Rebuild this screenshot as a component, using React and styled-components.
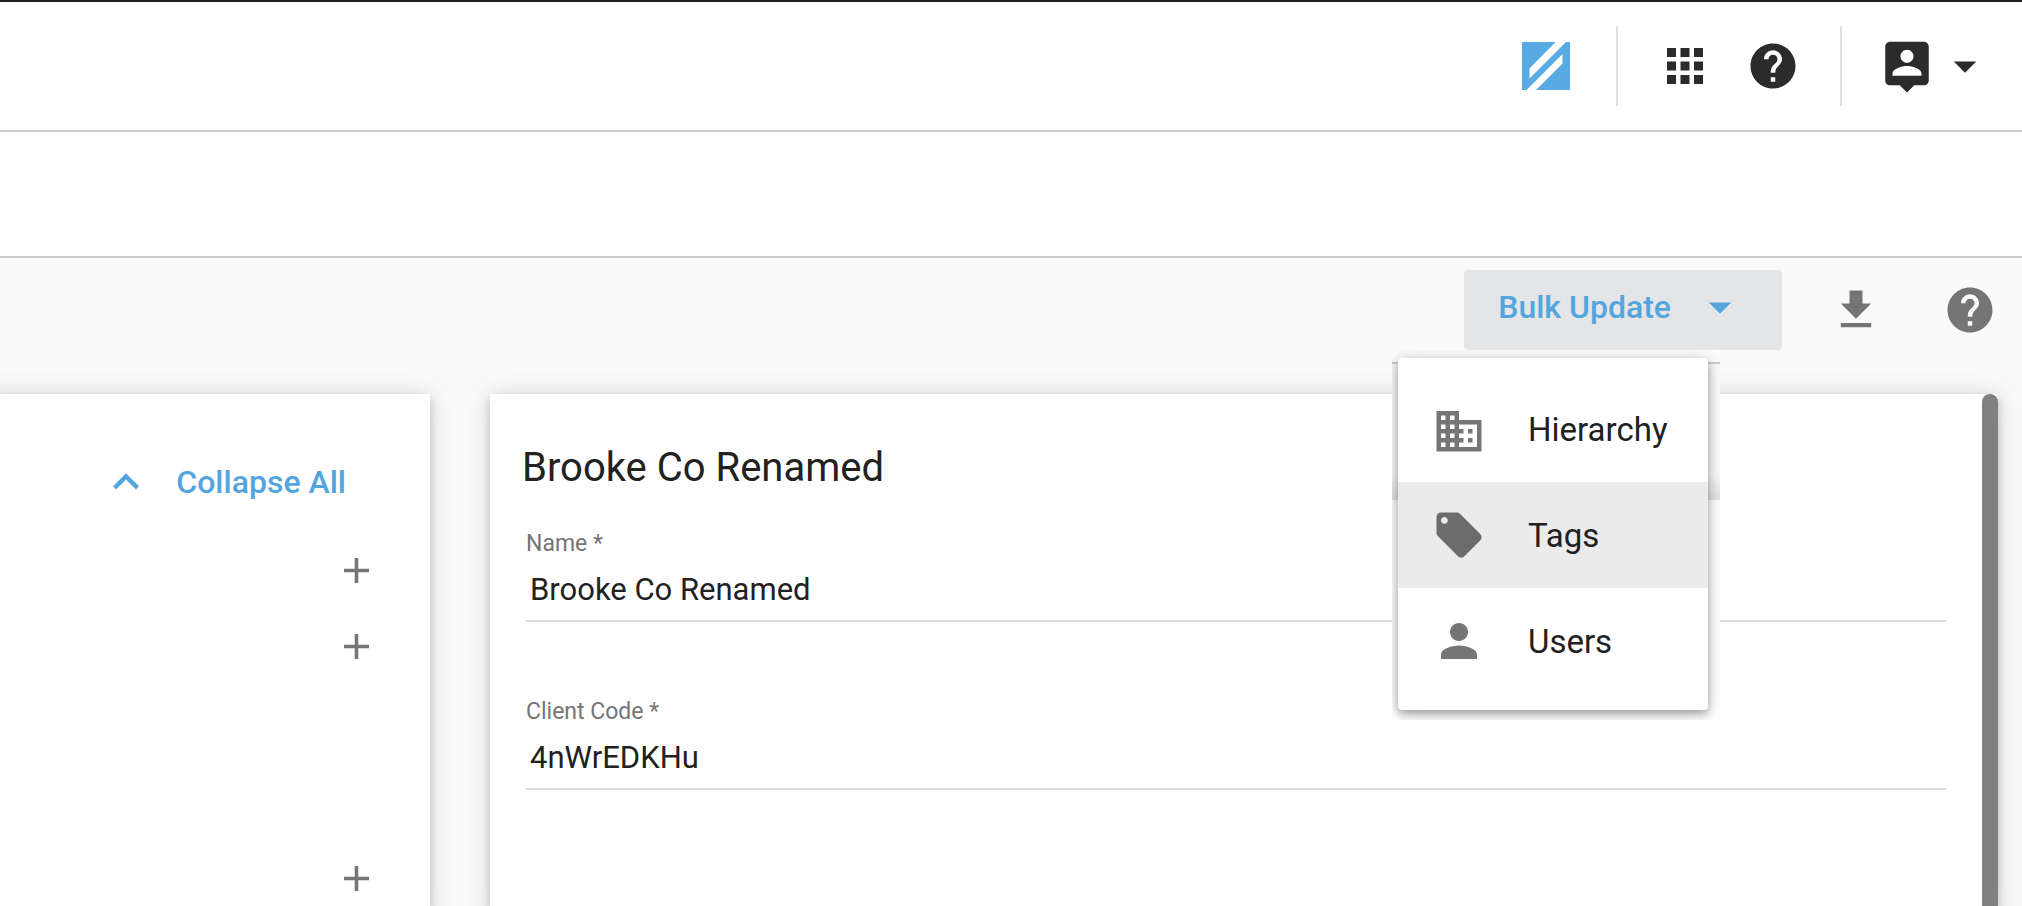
import { useState } from "react";
import styled, { createGlobalStyle } from "styled-components";
import {
  MdAdd,
  MdApps,
  MdArrowDropDown,
  MdExpandLess,
  MdGetApp,
  MdHelp,
  MdLocalOffer,
  MdPerson,
} from "react-icons/md";

const GlobalStyle = createGlobalStyle`
  * {
    box-sizing: border-box;
  }
  body {
    margin: 0;
    background: #fafafa;
    color: #212121;
    font-family: Roboto, "Liberation Sans", sans-serif;
  }
  button, input {
    font-family: inherit;
    color: inherit;
  }
`;

const Page = styled.div`
  display: flex;
  flex-direction: column;
  height: 100vh;
  overflow: hidden;
`;

const Header = styled.header`
  display: flex;
  align-items: center;
  justify-content: flex-end;
  flex: none;
  height: 132px;
  padding-right: 30px;
  background: #fff;
  border-top: 2px solid #222;
  border-bottom: 2px solid #ccc;
`;

const SubHeader = styled.div`
  flex: none;
  height: 126px;
  background: #fff;
  border-bottom: 2px solid #ccc;
`;

const PlainButton = styled.button`
  display: flex;
  align-items: center;
  justify-content: center;
  padding: 0;
  border: none;
  background: none;
  cursor: pointer;
`;

const LogoLink = styled.a`
  display: flex;
  padding: 0 10px;
`;

const Divider = styled.div`
  width: 2px;
  height: 80px;
  margin: 0 36px;
  background: #e0e0e0;
`;

const HeaderGroup = styled.div`
  display: flex;
  gap: 34px;
  padding: 0 4px;
`;

const HeaderButton = styled(PlainButton)`
  color: #2b2b2b;
  gap: 2px;
`;

const Toolbar = styled.div`
  display: flex;
  align-items: flex-start;
  justify-content: flex-end;
  flex: none;
  gap: 34px;
  height: 136px;
  padding: 12px 12px 0 0;
`;

const ToolbarButton = styled(PlainButton)`
  width: 80px;
  height: 80px;
  color: #757575;
`;

const Dropdown = styled.div`
  position: relative;
`;

const BulkButton = styled(PlainButton)`
  gap: 22px;
  height: 80px;
  padding: 0 35px 6px 34px;
  border-radius: 4px;
  background: #e4e5e7;
  color: #54a5de;
  font-size: 32px;
  font-weight: 500;
`;

/* the shadow of the menu is cut off at the edges of this frame */
const MenuFrame = styled.div`
  position: absolute;
  top: 100%;
  right: 62px;
  z-index: 1;
  width: 328px;
  padding: 8px 12px 10px 6px;
  overflow: hidden;
  background: linear-gradient(
    #fcfcfc 12px,
    #ccc 12px,
    #ccc 14px,
    #fafafa 14px,
    #fafafa 124px,
    #e2e2e2 150px,
    #fff 150px
  );
`;

const Menu = styled.div`
  padding: 18px 0 16px;
  border-radius: 4px;
  background: #fff;
  box-shadow: 0 4px 8px rgba(0, 0, 0, 0.3), 0 2px 20px rgba(0, 0, 0, 0.16);
`;

const MenuItem = styled(PlainButton)`
  justify-content: flex-start;
  gap: 42px;
  width: 100%;
  height: 106px;
  padding-left: 34px;
  background: ${(props) => (props.$active ? "#ebebeb" : "#fff")};
  font-size: 33px;

  svg {
    color: ${(props) => (props.$active ? "#6c6c6c" : "#757575")};
  }
`;

const Content = styled.main`
  display: flex;
  flex: 1;
  gap: 60px;
  padding-right: 24px;
`;

const Panel = styled.section`
  display: flex;
  background: #fff;
  box-shadow: 0 4px 8px rgba(0, 0, 0, 0.16), 0 2px 24px rgba(0, 0, 0, 0.16);
`;

/* runs off the left edge so no shadow shows there */
const TreePanel = styled(Panel)`
  flex: 0 0 454px;
  flex-direction: column;
  align-items: flex-end;
  gap: 18px;
  margin-left: -24px;
  padding: 56px 52px 0 0;
`;

const CollapseButton = styled(PlainButton)`
  gap: 24px;
  height: 64px;
  margin-right: 32px;
  color: #54a5de;
  font-size: 32px;
  font-weight: 500;
`;

const Tree = styled.div`
  display: flex;
  flex-direction: column;
  gap: 156px;
`;

const AddButton = styled(PlainButton)`
  height: 76px;
  color: #757575;
`;

const DetailPanel = styled(Panel)`
  flex: 1;
`;

const Detail = styled.div`
  flex: 1;
  padding: 50px 36px 0 32px;
`;

const Title = styled.h1`
  margin: 0 0 38px;
  font-size: 40px;
  font-weight: 400;
  line-height: 48px;
`;

const Form = styled.form`
  display: flex;
  flex-direction: column;
  gap: 76px;
  padding-left: 4px;
`;

const Field = styled.div`
  display: flex;
  flex-direction: column;
`;

const Label = styled.label`
  color: #757575;
  font-size: 23px;
  line-height: 28px;
`;

const Input = styled.input`
  width: 100%;
  height: 64px;
  padding: 0 4px;
  border: none;
  border-bottom: 2px solid #dedede;
  outline: none;
  background: none;
  font-size: 31px;
`;

const ScrollBar = styled.div`
  flex: 0 0 16px;
  border-radius: 8px 8px 0 0;
  background: #808080;
`;

function Logo() {
  return (
    <svg width="48" height="48" viewBox="0 0 48 48" aria-hidden="true">
      <path fill="#58aae2" d="M0 0H33.5L7.5 26.5V36.5L44 0H48V48H14L40.5 21.5V12L4.5 48H0Z" />
    </svg>
  );
}

function HierarchyIcon() {
  return (
    <svg width="54" height="54" viewBox="0 -1 24 24" fill="currentColor" aria-hidden="true">
      <path d="M12 7V3H2v18h20V7H12zM6 19H4v-2h2v2zm0-4H4v-2h2v2zm0-4H4V9h2v2zm0-4H4V5h2v2zm4 12H8v-2h2v2zm0-4H8v-2h2v2zm0-4H8V9h2v2zm0-4H8V5h2v2zm10 12h-8v-2h2v-2h-2v-2h2v-2h-2V9h8v10zm-2-8h-2v2h2v-2zm0 4h-2v2h2v-2z" />
    </svg>
  );
}

function AccountIcon() {
  return (
    <svg width="58" height="58" viewBox="0 0 24 24" fill="currentColor" aria-hidden="true">
      <path d="M19 2H5c-1.11 0-2 .9-2 2v14c0 1.1.89 2 2 2h4l3 3 3-3h4c1.1 0 2-.9 2-2V4c0-1.1-.9-2-2-2zm-7 3.3c1.49 0 2.7 1.21 2.7 2.7s-1.21 2.7-2.7 2.7S9.3 9.49 9.3 8s1.21-2.7 2.7-2.7zM18 16H6v-.9c0-2 4-3.1 6-3.1s6 1.1 6 3.1v.9z" />
    </svg>
  );
}

const menuItems = [
  { name: "Hierarchy", icon: <HierarchyIcon /> },
  { name: "Tags", icon: <MdLocalOffer size={54} /> },
  { name: "Users", icon: <MdPerson size={54} /> },
];

const treeGroups = [["client", "region"], ["team"]];

export default function App() {
  const [open, setOpen] = useState(true);
  const [active, setActive] = useState("Tags");
  const [name, setName] = useState("Brooke Co Renamed");
  const [code, setCode] = useState("4nWrEDKHu");

  return (
    <Page>
      <GlobalStyle />
      <Header>
        <LogoLink href="#" aria-label="Home">
          <Logo />
        </LogoLink>
        <Divider />
        <HeaderGroup>
          <HeaderButton aria-label="Apps">
            <MdApps size={54} />
          </HeaderButton>
          <HeaderButton aria-label="Help">
            <MdHelp size={54} />
          </HeaderButton>
        </HeaderGroup>
        <Divider />
        <HeaderButton aria-label="Account">
          <AccountIcon />
          <MdArrowDropDown size={54} />
        </HeaderButton>
      </Header>
      <SubHeader />
      <Toolbar>
        <Dropdown>
          <BulkButton aria-haspopup="menu" aria-expanded={open} onClick={() => setOpen(!open)}>
            Bulk Update
            <MdArrowDropDown size={54} />
          </BulkButton>
          {open && (
            <MenuFrame>
              <Menu role="menu">
                {menuItems.map((item) => (
                  <MenuItem
                    key={item.name}
                    role="menuitem"
                    $active={active === item.name}
                    onMouseEnter={() => setActive(item.name)}
                  >
                    {item.icon}
                    {item.name}
                  </MenuItem>
                ))}
              </Menu>
            </MenuFrame>
          )}
        </Dropdown>
        <ToolbarButton aria-label="Download">
          <MdGetApp size={52} />
        </ToolbarButton>
        <ToolbarButton aria-label="Page help">
          <MdHelp size={54} />
        </ToolbarButton>
      </Toolbar>
      <Content>
        <TreePanel>
          <CollapseButton>
            <MdExpandLess size={52} />
            Collapse All
          </CollapseButton>
          <Tree>
            {treeGroups.map((group) => (
              <div key={group[0]}>
                {group.map((node) => (
                  <AddButton key={node} aria-label={`Add ${node}`}>
                    <MdAdd size={43} />
                  </AddButton>
                ))}
              </div>
            ))}
          </Tree>
        </TreePanel>
        <DetailPanel>
          <Detail>
            <Title>Brooke Co Renamed</Title>
            <Form>
              <Field>
                <Label htmlFor="name">Name *</Label>
                <Input id="name" value={name} onChange={(e) => setName(e.target.value)} />
              </Field>
              <Field>
                <Label htmlFor="code">Client Code *</Label>
                <Input id="code" value={code} onChange={(e) => setCode(e.target.value)} />
              </Field>
            </Form>
          </Detail>
          <ScrollBar />
        </DetailPanel>
      </Content>
    </Page>
  );
}
